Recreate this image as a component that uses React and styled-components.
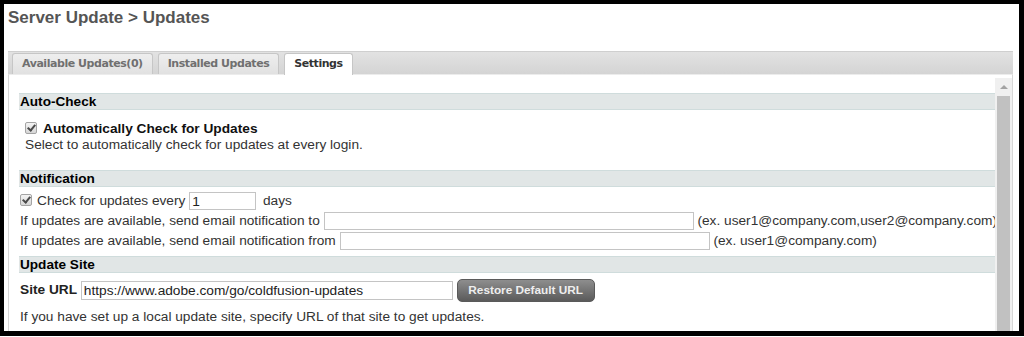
import React from "react";
import styled, { createGlobalStyle } from "styled-components";

const GlobalStyle = createGlobalStyle`
    html, body {
        margin: 0;
        padding: 0;
        background: #fff;
    }
    body {
        font-family: "Liberation Sans", Arial, sans-serif;
    }
`;

const Frame = styled.div`
    box-sizing: border-box;
    width: 1024px;
    height: 336px;
    border-style: solid;
    border-color: #000;
    border-width: 4px 5px 5px 4px;
    padding: 4px 6px 0 4px;
    overflow: hidden;
    background: #fff;
    display: flex;
    flex-direction: column;
`;

const Title = styled.h1`
    margin: 0;
    font-size: 17px;
    line-height: 20px;
    font-weight: bold;
    color: #555;
`;

const TabBar = styled.div`
    box-sizing: border-box;
    margin-top: 23px;
    height: 23px;
    padding: 1px 0 0 4px;
    display: flex;
    align-items: flex-end;
    gap: 5px;
    border-top: 1px solid #cfcfcf;
    background: linear-gradient(#e2e2e2, #d4d4d4);
    flex-shrink: 0;
`;

const Tab = styled.div`
    box-sizing: border-box;
    height: ${(p) => (p.$active ? 22 : 21)}px;
    margin-bottom: ${(p) => (p.$active ? -1 : 0)}px;
    padding: 0 9px;
    border: 1px solid #c6c6c6;
    border-bottom: none;
    border-radius: 3px 3px 0 0;
    background: ${(p) => (p.$active ? "#fff" : "linear-gradient(#eeeeee, #e1e1e1)")};
    color: ${(p) => (p.$active ? "#333" : "#707070")};
    font-family: "DejaVu Sans", Verdana, sans-serif;
    font-weight: bold;
    font-size: 11px;
    letter-spacing: -0.45px;
    line-height: 20px;
    white-space: nowrap;
    position: relative;
    z-index: ${(p) => (p.$active ? 1 : 0)};
`;

const Panel = styled.div`
    box-sizing: border-box;
    height: 290px;
    flex-shrink: 0;
    display: flex;
    padding-top: 3px;
    border: 1px solid #d6d6d6;
    border-top: 1px solid #ececec;
    background: #fff;
`;

const Content = styled.div`
    flex: 1;
    min-width: 0;
    overflow: hidden;
    padding: 15px 0 0 10px;
    font-size: 13.7px;
    color: #333;
`;

const Scrollbar = styled.div`
    width: 17px;
    flex-shrink: 0;
    display: flex;
    flex-direction: column;
    background: #f0f0f0;
`;

const ScrollArrow = styled.div`
    height: 18px;
    display: flex;
    align-items: center;
    justify-content: center;

    &::before {
        content: "";
        border-left: 4px solid transparent;
        border-right: 4px solid transparent;
        border-bottom: 4px solid #a3a3a3;
    }
`;

const ScrollThumb = styled.div`
    flex: 1;
    margin: 0 2px;
    background: #c1c1c1;
`;

const SectionTitle = styled.div`
    box-sizing: border-box;
    height: 17px;
    margin-top: ${(p) => p.$top || 0}px;
    padding-left: 1px;
    border-top: 1px solid #cfdcdc;
    border-bottom: 1px solid #cfdcdc;
    background: #e1e6e6;
    color: #000;
    font-weight: bold;
    font-size: 13.6px;
    line-height: 15px;
`;

const Check = styled.input.attrs({ type: "checkbox" })`
    appearance: none;
    box-sizing: border-box;
    width: 12px;
    height: 12px;
    margin: 0 ${(p) => p.$gap || 6}px 0 0;
    vertical-align: -1px;
    border: 1px solid #a4a4a4;
    border-radius: 2px;
    background: linear-gradient(#f4f4f4, #d6d6d6);
    position: relative;

    &::after {
        content: "";
        position: absolute;
        left: 3px;
        top: 0px;
        width: 3px;
        height: 6px;
        border: solid #4a4a4a;
        border-width: 0 2px 2px 0;
        transform: rotate(40deg);
    }
`;

const OptionRow = styled.div`
    margin-top: 11px;
    padding-left: 6px;
    line-height: 16px;
    white-space: nowrap;
`;

const OptionLabel = styled.span`
    font-weight: bold;
    font-size: 13.7px;
    color: #111;
`;

const Hint = styled.div`
    margin-top: ${(p) => p.$top || 0}px;
    padding-left: ${(p) => p.$indent || 1}px;
    line-height: 16px;
    white-space: nowrap;
`;

const FieldRow = styled.div`
    margin-top: ${(p) => p.$top || 0}px;
    padding-left: 1px;
    height: ${(p) => p.$h || 20}px;
    line-height: ${(p) => p.$h || 20}px;
    white-space: nowrap;
`;

const TextInput = styled.input`
    box-sizing: border-box;
    width: ${(p) => p.$w}px;
    height: ${(p) => p.$h || 18}px;
    margin: 0 ${(p) => p.$after || 0}px 0 0;
    padding: 0 2px;
    border: 1px solid #c4c4c4;
    font-family: "Liberation Sans", Arial, sans-serif;
    font-size: 13.7px;
    color: #222;
    vertical-align: middle;
    outline: none;
`;

const FieldLabel = styled.span`
    font-weight: bold;
    color: #222;
`;

const Button = styled.button`
    box-sizing: border-box;
    width: 138px;
    height: 23px;
    padding: 0;
    border: 1px solid #5a5a5a;
    border-radius: 5px;
    background: linear-gradient(#8e8e8e, #5a5a5a);
    color: #eeeeee;
    font-family: "Liberation Sans", Arial, sans-serif;
    font-weight: bold;
    font-size: 11.8px;
    vertical-align: middle;
    cursor: pointer;

    &:hover {
        background: linear-gradient(#7e7e7e, #505050);
    }
`;

const tabs = ["Available Updates(0)", "Installed Updates", "Settings"];

const App = () => {
    return (
        <>
            <GlobalStyle />
            <Frame>
                <Title>Server Update &gt; Updates</Title>
                <TabBar>
                    {tabs.map((t) => (
                        <Tab key={t} $active={t === "Settings"}>
                            {t}
                        </Tab>
                    ))}
                </TabBar>
                <Panel>
                    <Content>
                        <SectionTitle>Auto-Check</SectionTitle>
                        <OptionRow>
                            <Check defaultChecked />
                            <OptionLabel>Automatically Check for Updates</OptionLabel>
                        </OptionRow>
                        <Hint $indent={6}>Select to automatically check for updates at every login.</Hint>

                        <SectionTitle $top={17}>Notification</SectionTitle>
                        <FieldRow $top={4}>
                            <Check defaultChecked $gap={5} />
                            Check for updates every <TextInput $w={67} defaultValue="1" $after={3} /> days
                        </FieldRow>
                        <FieldRow>
                            If updates are available, send email notification to <TextInput $w={370} />{" "}
                            (ex. user1@company.com,user2@company.com)
                        </FieldRow>
                        <FieldRow>
                            If updates are available, send email notification from <TextInput $w={370} />{" "}
                            (ex. user1@company.com)
                        </FieldRow>

                        <SectionTitle $top={5}>Update Site</SectionTitle>
                        <FieldRow $top={5} $h={23}>
                            <FieldLabel>Site URL</FieldLabel>{" "}
                            <TextInput $w={372} $h={19} defaultValue="https://www.adobe.com/go/coldfusion-updates" />{" "}
                            <Button type="button">Restore Default URL</Button>
                        </FieldRow>
                        <Hint $top={8}>
                            If you have set up a local update site, specify URL of that site to get updates.
                        </Hint>
                    </Content>
                    <Scrollbar>
                        <ScrollArrow />
                        <ScrollThumb />
                    </Scrollbar>
                </Panel>
            </Frame>
        </>
    );
};

export default App;
